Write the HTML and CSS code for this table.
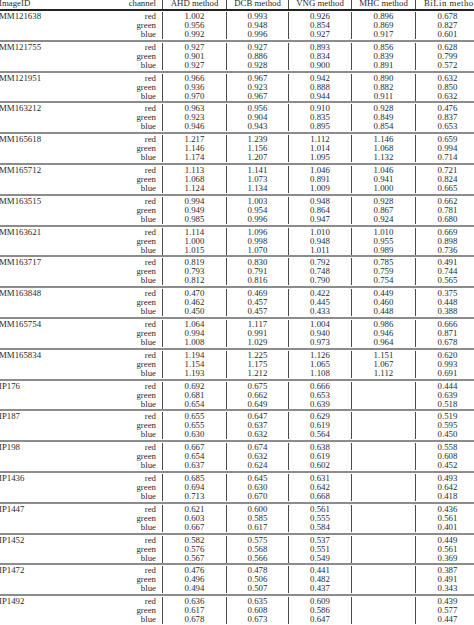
FILE: index.html
```html
<!DOCTYPE html>
<html>
<head>
<meta charset="utf-8">
<link rel="stylesheet" href="styles.css">
</head>
<body>
<div class="table">
  <div class="row head">
    <div class="id">ImageID</div>
    <div class="ch">channel</div>
    <div class="v">AHD method</div>
    <div class="v">DCB method</div>
    <div class="v">VNG method</div>
    <div class="v">MHC method</div>
    <div class="v wide">BiLin method</div>
  </div>

  <div class="row group">
    <div class="id">MM121638</div>
    <div class="ch">red<br>green<br>blue</div>
    <div class="v">1.002<br>0.956<br>0.992</div>
    <div class="v">0.993<br>0.948<br>0.996</div>
    <div class="v">0.926<br>0.854<br>0.927</div>
    <div class="v">0.896<br>0.869<br>0.917</div>
    <div class="v">0.678<br>0.827<br>0.601</div>
  </div>
  <div class="row group">
    <div class="id">MM121755</div>
    <div class="ch">red<br>green<br>blue</div>
    <div class="v">0.927<br>0.901<br>0.927</div>
    <div class="v">0.927<br>0.886<br>0.928</div>
    <div class="v">0.893<br>0.834<br>0.900</div>
    <div class="v">0.856<br>0.839<br>0.891</div>
    <div class="v">0.628<br>0.799<br>0.572</div>
  </div>
  <div class="row group">
    <div class="id">MM121951</div>
    <div class="ch">red<br>green<br>blue</div>
    <div class="v">0.966<br>0.936<br>0.970</div>
    <div class="v">0.967<br>0.923<br>0.967</div>
    <div class="v">0.942<br>0.888<br>0.944</div>
    <div class="v">0.890<br>0.882<br>0.911</div>
    <div class="v">0.632<br>0.850<br>0.632</div>
  </div>
  <div class="row group">
    <div class="id">MM163212</div>
    <div class="ch">red<br>green<br>blue</div>
    <div class="v">0.963<br>0.923<br>0.946</div>
    <div class="v">0.956<br>0.904<br>0.943</div>
    <div class="v">0.910<br>0.835<br>0.895</div>
    <div class="v">0.928<br>0.849<br>0.854</div>
    <div class="v">0.476<br>0.837<br>0.653</div>
  </div>
  <div class="row group">
    <div class="id">MM165618</div>
    <div class="ch">red<br>green<br>blue</div>
    <div class="v">1.217<br>1.146<br>1.174</div>
    <div class="v">1.239<br>1.156<br>1.207</div>
    <div class="v">1.112<br>1.014<br>1.095</div>
    <div class="v">1.146<br>1.068<br>1.132</div>
    <div class="v">0.659<br>0.994<br>0.714</div>
  </div>
  <div class="row group">
    <div class="id">MM165712</div>
    <div class="ch">red<br>green<br>blue</div>
    <div class="v">1.113<br>1.068<br>1.124</div>
    <div class="v">1.141<br>1.073<br>1.134</div>
    <div class="v">1.046<br>0.891<br>1.009</div>
    <div class="v">1.046<br>0.941<br>1.000</div>
    <div class="v">0.721<br>0.824<br>0.665</div>
  </div>
  <div class="row group">
    <div class="id">MM163515</div>
    <div class="ch">red<br>green<br>blue</div>
    <div class="v">0.994<br>0.949<br>0.985</div>
    <div class="v">1.003<br>0.954<br>0.996</div>
    <div class="v">0.948<br>0.864<br>0.947</div>
    <div class="v">0.928<br>0.867<br>0.924</div>
    <div class="v">0.662<br>0.781<br>0.680</div>
  </div>
  <div class="row group">
    <div class="id">MM163621</div>
    <div class="ch">red<br>green<br>blue</div>
    <div class="v">1.114<br>1.000<br>1.015</div>
    <div class="v">1.096<br>0.998<br>1.070</div>
    <div class="v">1.010<br>0.948<br>1.011</div>
    <div class="v">1.010<br>0.955<br>0.989</div>
    <div class="v">0.669<br>0.898<br>0.736</div>
  </div>
  <div class="row group">
    <div class="id">MM163717</div>
    <div class="ch">red<br>green<br>blue</div>
    <div class="v">0.819<br>0.793<br>0.812</div>
    <div class="v">0.830<br>0.791<br>0.816</div>
    <div class="v">0.792<br>0.748<br>0.790</div>
    <div class="v">0.785<br>0.759<br>0.754</div>
    <div class="v">0.491<br>0.744<br>0.565</div>
  </div>
  <div class="row group">
    <div class="id">MM163848</div>
    <div class="ch">red<br>green<br>blue</div>
    <div class="v">0.470<br>0.462<br>0.450</div>
    <div class="v">0.469<br>0.457<br>0.457</div>
    <div class="v">0.422<br>0.445<br>0.433</div>
    <div class="v">0.449<br>0.460<br>0.448</div>
    <div class="v">0.375<br>0.448<br>0.388</div>
  </div>
  <div class="row group">
    <div class="id">MM165754</div>
    <div class="ch">red<br>green<br>blue</div>
    <div class="v">1.064<br>0.994<br>1.008</div>
    <div class="v">1.117<br>0.991<br>1.029</div>
    <div class="v">1.004<br>0.940<br>0.973</div>
    <div class="v">0.986<br>0.946<br>0.964</div>
    <div class="v">0.666<br>0.871<br>0.678</div>
  </div>
  <div class="row group">
    <div class="id">MM165834</div>
    <div class="ch">red<br>green<br>blue</div>
    <div class="v">1.194<br>1.154<br>1.193</div>
    <div class="v">1.225<br>1.175<br>1.212</div>
    <div class="v">1.126<br>1.065<br>1.108</div>
    <div class="v">1.151<br>1.067<br>1.112</div>
    <div class="v">0.620<br>0.993<br>0.691</div>
  </div>
  <div class="row group">
    <div class="id">IP176</div>
    <div class="ch">red<br>green<br>blue</div>
    <div class="v">0.692<br>0.681<br>0.654</div>
    <div class="v">0.675<br>0.662<br>0.649</div>
    <div class="v">0.666<br>0.653<br>0.639</div>
    <div class="v"></div>
    <div class="v">0.444<br>0.639<br>0.518</div>
  </div>
  <div class="row group">
    <div class="id">IP187</div>
    <div class="ch">red<br>green<br>blue</div>
    <div class="v">0.655<br>0.655<br>0.630</div>
    <div class="v">0.647<br>0.637<br>0.632</div>
    <div class="v">0.629<br>0.619<br>0.564</div>
    <div class="v"></div>
    <div class="v">0.519<br>0.595<br>0.450</div>
  </div>
  <div class="row group">
    <div class="id">IP198</div>
    <div class="ch">red<br>green<br>blue</div>
    <div class="v">0.667<br>0.654<br>0.637</div>
    <div class="v">0.674<br>0.632<br>0.624</div>
    <div class="v">0.638<br>0.619<br>0.602</div>
    <div class="v"></div>
    <div class="v">0.558<br>0.608<br>0.452</div>
  </div>
  <div class="row group">
    <div class="id">IP1436</div>
    <div class="ch">red<br>green<br>blue</div>
    <div class="v">0.685<br>0.694<br>0.713</div>
    <div class="v">0.645<br>0.630<br>0.670</div>
    <div class="v">0.631<br>0.642<br>0.668</div>
    <div class="v"></div>
    <div class="v">0.493<br>0.642<br>0.418</div>
  </div>
  <div class="row group">
    <div class="id">IP1447</div>
    <div class="ch">red<br>green<br>blue</div>
    <div class="v">0.621<br>0.603<br>0.667</div>
    <div class="v">0.600<br>0.585<br>0.617</div>
    <div class="v">0.561<br>0.555<br>0.584</div>
    <div class="v"></div>
    <div class="v">0.436<br>0.561<br>0.401</div>
  </div>
  <div class="row group">
    <div class="id">IP1452</div>
    <div class="ch">red<br>green<br>blue</div>
    <div class="v">0.582<br>0.576<br>0.567</div>
    <div class="v">0.575<br>0.568<br>0.566</div>
    <div class="v">0.537<br>0.551<br>0.549</div>
    <div class="v"></div>
    <div class="v">0.449<br>0.561<br>0.369</div>
  </div>
  <div class="row group">
    <div class="id">IP1472</div>
    <div class="ch">red<br>green<br>blue</div>
    <div class="v">0.476<br>0.496<br>0.494</div>
    <div class="v">0.478<br>0.506<br>0.507</div>
    <div class="v">0.441<br>0.482<br>0.437</div>
    <div class="v"></div>
    <div class="v">0.387<br>0.491<br>0.343</div>
  </div>
  <div class="row group">
    <div class="id">IP1492</div>
    <div class="ch">red<br>green<br>blue</div>
    <div class="v">0.636<br>0.617<br>0.678</div>
    <div class="v">0.635<br>0.608<br>0.673</div>
    <div class="v">0.609<br>0.586<br>0.647</div>
    <div class="v"></div>
    <div class="v">0.439<br>0.577<br>0.447</div>
  </div>
</div>
</body>
</html>
```

FILE: styles.css
```css
html, body {
  margin: 0;
  padding: 0;
  background: #ffffff;
  overflow: hidden;
}

body {
  font-family: "Liberation Serif", "Times New Roman", serif;
  font-size: 8.8px;
  color: #2a2a2a;
}

.table {
  width: 480px;
  margin-left: -1px;
}

.row {
  display: grid;
  grid-template-columns: 119px 44px 64px 62px 63px 64px 64px;
}

.id {
  white-space: nowrap;
}

.ch {
  text-align: right;
  padding-right: 6px;
}

.v {
  text-align: center;
  border-left: 1px solid #4a4a4a;
  white-space: nowrap;
}

.wide {
  text-align: left;
  padding-left: 8px;
  letter-spacing: 0.45px;
}

.head {
  margin-top: -3px;
  line-height: 12px;
  border-bottom: 2px solid #222222;
}

.group {
  line-height: 9px;
  padding: 1px 0 0.8px;
  border-bottom: 2px solid #8c8c8c;
}
```
